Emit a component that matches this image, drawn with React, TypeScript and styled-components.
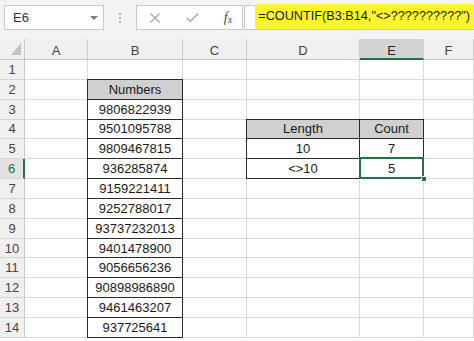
import React from "react";
import styled, { createGlobalStyle, css } from "styled-components";

const GlobalStyle = createGlobalStyle`
  html, body { margin: 0; padding: 0; background: #ffffff; overflow: hidden; }
  body { font-family: "Liberation Sans", Arial, sans-serif; }
  * { box-sizing: border-box; }
`;

const Toolbar = styled.div`
  display: flex;
  align-items: flex-start;
  height: 39px;
  padding: 5px 0 0 4px;
  background: #f3f3f3;
`;

const NameBox = styled.div`
  display: flex;
  align-items: center;
  justify-content: space-between;
  width: 100px;
  height: 25px;
  padding: 0 5px 0 8px;
  background: #ffffff;
  border: 1px solid #c9c9c9;
  font-size: 13px;
  color: #333333;
`;

const DropArrow = styled.span`
  width: 0;
  height: 0;
  border-left: 4px solid transparent;
  border-right: 4px solid transparent;
  border-top: 4px solid #7a7a7a;
  margin-top: 1px;
`;

const Grip = styled.div`
  display: flex;
  flex-direction: column;
  align-items: center;
  justify-content: center;
  gap: 2px;
  width: 32px;
  height: 25px;
`;

const GripDot = styled.span`
  width: 2px;
  height: 2px;
  background: #b5b5b5;
`;

const FxBox = styled.div`
  display: flex;
  align-items: center;
  width: 108px;
  height: 25px;
  padding: 0 10px 0 12px;
  justify-content: space-between;
  background: #ffffff;
  border: 1px solid #c9c9c9;
`;

const FxLabel = styled.span`
  font-family: "Liberation Serif", "Times New Roman", serif;
  font-style: italic;
  font-size: 14px;
  color: #4a4a4a;
  & sub { font-size: 10px; vertical-align: -1px; }
`;

const FormulaBox = styled.div`
  flex: 1;
  display: flex;
  align-items: center;
  height: 25px;
  margin-left: 1px;
  padding-left: 10px;
  background: #ffffff;
  border: 1px solid #c9c9c9;
  border-right: none;
`;

const Highlight = styled.span`
  display: inline-flex;
  align-items: center;
  height: 25px;
  margin-top: -3px;
  padding: 0 4px 0 3px;
  background: #fbf52a;
  border-radius: 3px;
  font-size: 12.7px;
  color: #1a1a1a;
  white-space: nowrap;
`;

const Sheet = styled.div`
  display: grid;
  grid-template-columns: 25px 63px 95px 64px 113px 64px 1fr;
  grid-template-rows: 21px repeat(14, 19.85px);
  font-size: 13px;
  color: #1a1a1a;
`;

const headerBase = css`
  display: flex;
  align-items: center;
  justify-content: center;
  background: #f0f0f0;
  color: #444444;
  font-size: 13px;
`;

const Corner = styled.div`
  ${headerBase};
  position: relative;
  border-right: 1px solid #c8c8c8;
  border-bottom: 1px solid #c8c8c8;
  justify-content: flex-end;
  align-items: flex-end;
  padding: 0 3px 4px 0;
`;

const ColHeader = styled.div<{ $active?: boolean }>`
  ${headerBase};
  border-right: 1px solid #cfcfcf;
  border-bottom: 1px solid #c8c8c8;
  padding-top: 2px;
  ${(p) =>
    p.$active &&
    css`
      background: #d3d3d3;
      color: #262626;
      border-bottom: 2px solid #217346;
      padding-top: 3px;
    `}
`;

const RowHeader = styled.div<{ $active?: boolean }>`
  ${headerBase};
  border-right: 1px solid #c8c8c8;
  border-bottom: 1px solid #d6d6d6;
  ${(p) =>
    p.$active &&
    css`
      background: #e2e2e2;
      color: #217346;
      border-right: 2px solid #217346;
    `}
`;

type Kind = "plain" | "table" | "head";

const Cell = styled.div<{ $kind: Kind; $selected?: boolean }>`
  position: relative;
  display: flex;
  align-items: center;
  justify-content: center;
  border-right: 1px solid #dadada;
  border-bottom: 1px solid #dadada;
  background: ${(p) => (p.$kind === "head" ? "#d0d0d0" : "#ffffff")};
  white-space: nowrap;
  ${(p) =>
    p.$kind !== "plain" &&
    css`
      &::before {
        content: "";
        position: absolute;
        top: -1px;
        left: -1px;
        right: -1px;
        bottom: -1px;
        border: 1px solid #2a2a2a;
        pointer-events: none;
      }
    `}
  ${(p) =>
    p.$selected &&
    css`
      &::after {
        content: "";
        position: absolute;
        top: -2px;
        left: -1px;
        right: -1px;
        bottom: -1px;
        border: 2px solid #217346;
        pointer-events: none;
      }
    `}
`;

const Handle = styled.span`
  position: absolute;
  right: -4px;
  bottom: -4px;
  width: 6px;
  height: 6px;
  background: #217346;
  border: 1px solid #ffffff;
  z-index: 2;
`;

const columns = ["A", "B", "C", "D", "E", "F"];

const numbers = [
  "9806822939",
  "9501095788",
  "9809467815",
  "936285874",
  "9159221411",
  "9252788017",
  "93737232013",
  "9401478900",
  "9056656236",
  "90898986890",
  "9461463207",
  "937725641",
];

type CellData = { text?: string; kind: Kind; selected?: boolean };

function cellAt(row: number, col: string): CellData {
  if (col === "B") {
    if (row === 2) return { text: "Numbers", kind: "head" };
    if (row >= 3 && row <= 14) return { text: numbers[row - 3], kind: "table" };
  }
  if (col === "D" || col === "E") {
    const table: Record<number, [string, string]> = {
      4: ["Length", "Count"],
      5: ["10", "7"],
      6: ["<>10", "5"],
    };
    const r = table[row];
    if (r) {
      const text = col === "D" ? r[0] : r[1];
      return {
        text,
        kind: row === 4 ? "head" : "table",
        selected: row === 6 && col === "E",
      };
    }
  }
  return { kind: "plain" };
}

const CloseIcon = () => (
  <svg width="12" height="12" viewBox="0 0 12 12">
    <path d="M1.5 1.5 L10.5 10.5 M10.5 1.5 L1.5 10.5" stroke="#a8a8a8" strokeWidth="1.4" fill="none" />
  </svg>
);

const CheckIcon = () => (
  <svg width="13" height="11" viewBox="0 0 13 11">
    <path d="M1 6 L4.5 9.5 L12 1.5" stroke="#a8a8a8" strokeWidth="1.4" fill="none" />
  </svg>
);

const CornerTriangle = () => (
  <svg width="10" height="12" viewBox="0 0 10 12">
    <polygon points="10,0 10,12 0,12" fill="#c4c4c4" />
  </svg>
);

export default function App() {
  const rows = Array.from({ length: 14 }, (_, i) => i + 1);
  return (
    <>
      <GlobalStyle />
      <Toolbar>
        <NameBox>
          <span>E6</span>
          <DropArrow />
        </NameBox>
        <Grip>
          <GripDot />
          <GripDot />
          <GripDot />
        </Grip>
        <FxBox>
          <CloseIcon />
          <CheckIcon />
          <FxLabel>
            f<sub>x</sub>
          </FxLabel>
        </FxBox>
        <FormulaBox>
          <Highlight>=COUNTIF(B3:B14,"&lt;&gt;??????????")</Highlight>
        </FormulaBox>
      </Toolbar>
      <Sheet>
        <Corner>
          <CornerTriangle />
        </Corner>
        {columns.map((c) => (
          <ColHeader key={c} $active={c === "E"}>
            {c}
          </ColHeader>
        ))}
        {rows.map((r) => (
          <React.Fragment key={r}>
            <RowHeader $active={r === 6}>{r}</RowHeader>
            {columns.map((c) => {
              const d = cellAt(r, c);
              return (
                <Cell key={c} $kind={d.kind} $selected={d.selected}>
                  {d.text}
                  {d.selected && <Handle />}
                </Cell>
              );
            })}
          </React.Fragment>
        ))}
      </Sheet>
    </>
  );
}
